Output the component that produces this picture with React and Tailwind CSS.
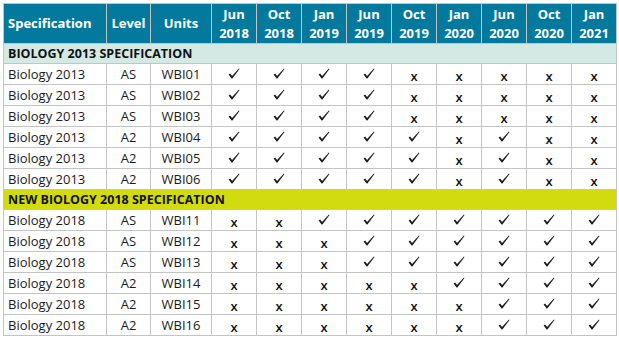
import React from "react";

const months = [
  ["Jun", "2018"], ["Oct", "2018"], ["Jan", "2019"], ["Jun", "2019"], ["Oct", "2019"],
  ["Jan", "2020"], ["Jun", "2020"], ["Oct", "2020"], ["Jan", "2021"],
];

const sections = [
  {
    title: "BIOLOGY 2013 SPECIFICATION",
    bg: "bg-[#d5e9e4]",
    rows: [
      ["Biology 2013", "AS", "WBI01", "1111xxxxx"],
      ["Biology 2013", "AS", "WBI02", "1111xxxxx"],
      ["Biology 2013", "AS", "WBI03", "1111xxxxx"],
      ["Biology 2013", "A2", "WBI04", "11111x1xx"],
      ["Biology 2013", "A2", "WBI05", "11111x1xx"],
      ["Biology 2013", "A2", "WBI06", "11111x1xx"],
    ],
  },
  {
    title: "NEW BIOLOGY 2018 SPECIFICATION",
    bg: "bg-[#d2db0e]",
    rows: [
      ["Biology 2018", "AS", "WBI11", "xx1111111"],
      ["Biology 2018", "AS", "WBI12", "xxx111111"],
      ["Biology 2018", "AS", "WBI13", "xxx111111"],
      ["Biology 2018", "A2", "WBI14", "xxxxx1111"],
      ["Biology 2018", "A2", "WBI15", "xxxxxx111"],
      ["Biology 2018", "A2", "WBI16", "xxxxxx111"],
    ],
  },
];

function Mark({ v }) {
  if (v === "1") {
    return (
      <svg width="12" height="11" viewBox="0 0 12 11" className="inline-block relative -top-[2px]">
        <path d="M0.6 6.6 L2.1 5.6 L4.1 8.1 L10.9 0.4 L11.5 0.9 L4.4 10.6 L3.6 10.6 Z" fill="#1a1a1a" />
      </svg>
    );
  }
  return (
    <span className="inline-block text-[13px] leading-none font-semibold text-[#111] relative top-[2px]">
      x
    </span>
  );
}

export default function App() {
  return (
    <div className="w-[619px] h-[340px] bg-white pt-[3px] pl-[3px] [font-family:'Open_Sans',sans-serif]">
      <table className="border-collapse table-fixed text-[13px] text-[#1a1a1a]">
        <colgroup>
          <col className="w-[103px]" />
          <col className="w-[44px]" />
          <col className="w-[61px]" />
          {months.map((m, i) => (
            <col key={i} className="w-[45px]" />
          ))}
        </colgroup>
        <thead>
          <tr className="bg-[#037a9d] text-white font-bold h-[40px]">
            <th className="border border-[#c4c4c4] text-left pl-[4px] font-bold">Specification</th>
            <th className="border border-[#c4c4c4] font-bold">Level</th>
            <th className="border border-[#c4c4c4] font-bold">Units</th>
            {months.map(([m, y], i) => (
              <th key={i} className="border border-[#c4c4c4] font-bold leading-[19px] p-0">
                <div className="flex flex-col items-center">
                  <span>{m}</span>
                  <span>{y}</span>
                </div>
              </th>
            ))}
          </tr>
        </thead>
        <tbody>
          {sections.map((s) => (
            <React.Fragment key={s.title}>
              <tr className={`${s.bg} h-[20px]`}>
                <td colSpan={12} className="border border-[#c4c4c4] pl-[4px] font-bold text-[12.5px] text-[#111] leading-[19px]">
                  {s.title}
                </td>
              </tr>
              {s.rows.map(([spec, lvl, unit, marks]) => (
                <tr key={unit} className="h-[21px]">
                  <td className="border border-[#c4c4c4] pl-[4px] leading-[20px]">{spec}</td>
                  <td className="border border-[#c4c4c4] text-center leading-[20px]">{lvl}</td>
                  <td className="border border-[#c4c4c4] text-center leading-[20px]">{unit}</td>
                  {marks.split("").map((v, i) => (
                    <td key={i} className="border border-[#c4c4c4] text-center leading-[20px] p-0">
                      <Mark v={v} />
                    </td>
                  ))}
                </tr>
              ))}
            </React.Fragment>
          ))}
        </tbody>
      </table>
    </div>
  );
}
